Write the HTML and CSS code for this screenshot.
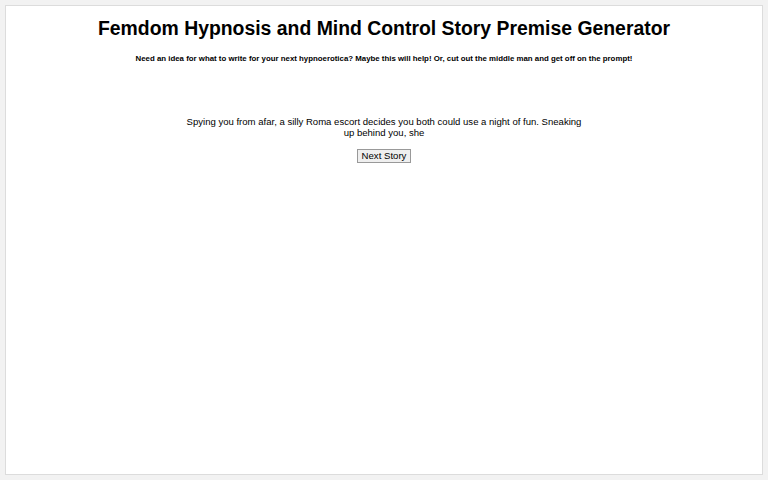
FILE: index.html
```html
<!DOCTYPE html>
<html lang="en">
<head>
<meta charset="utf-8">
<title>Femdom Hypnosis and Mind Control Story Premise Generator</title>
<link rel="stylesheet" href="styles.css">
</head>
<body>
<main class="page">
  <h1 class="title">Femdom Hypnosis and Mind Control Story Premise Generator</h1>
  <p class="intro">Need an idea for what to write for your next hypnoerotica? Maybe this will help! Or, cut out the middle man and get off on the prompt!</p>
  <section class="story">
    <p class="story-text">Spying you from afar, a silly Roma escort decides you both could use a night of fun. Sneaking up behind you, she</p>
    <button class="next" type="button">Next Story</button>
  </section>
</main>
</body>
</html>
```

FILE: styles.css
```css
html, body {
  margin: 0;
  height: 100%;
}

body {
  background: #f2f2f2;
  padding: 5px;
  box-sizing: border-box;
  font-family: "Liberation Sans", Arial, sans-serif;
  color: #000;
}

.page {
  background: #fff;
  border: 1px solid #dcdcdc;
  height: 100%;
  box-sizing: border-box;
  text-align: center;
  padding-top: 10px;
}

.title {
  margin: 0;
  font-size: 19.4px;
  font-weight: bold;
  line-height: 24px;
}

.intro {
  margin: 14px 0 0;
  font-size: 7.85px;
  font-weight: bold;
  line-height: 10px;
}

.story {
  margin-top: 52px;
  display: flex;
  flex-direction: column;
  align-items: center;
}

.story-text {
  margin: 0;
  width: 400px;
  font-size: 9.55px;
  line-height: 11px;
}

.next {
  margin-top: 11px;
  font-family: "Liberation Sans", Arial, sans-serif;
  font-size: 9.6px;
  line-height: 12px;
  padding: 0 4px;
  background: #efefef;
  border: 1px solid #999;
  border-radius: 0;
  color: #000;
}
```
